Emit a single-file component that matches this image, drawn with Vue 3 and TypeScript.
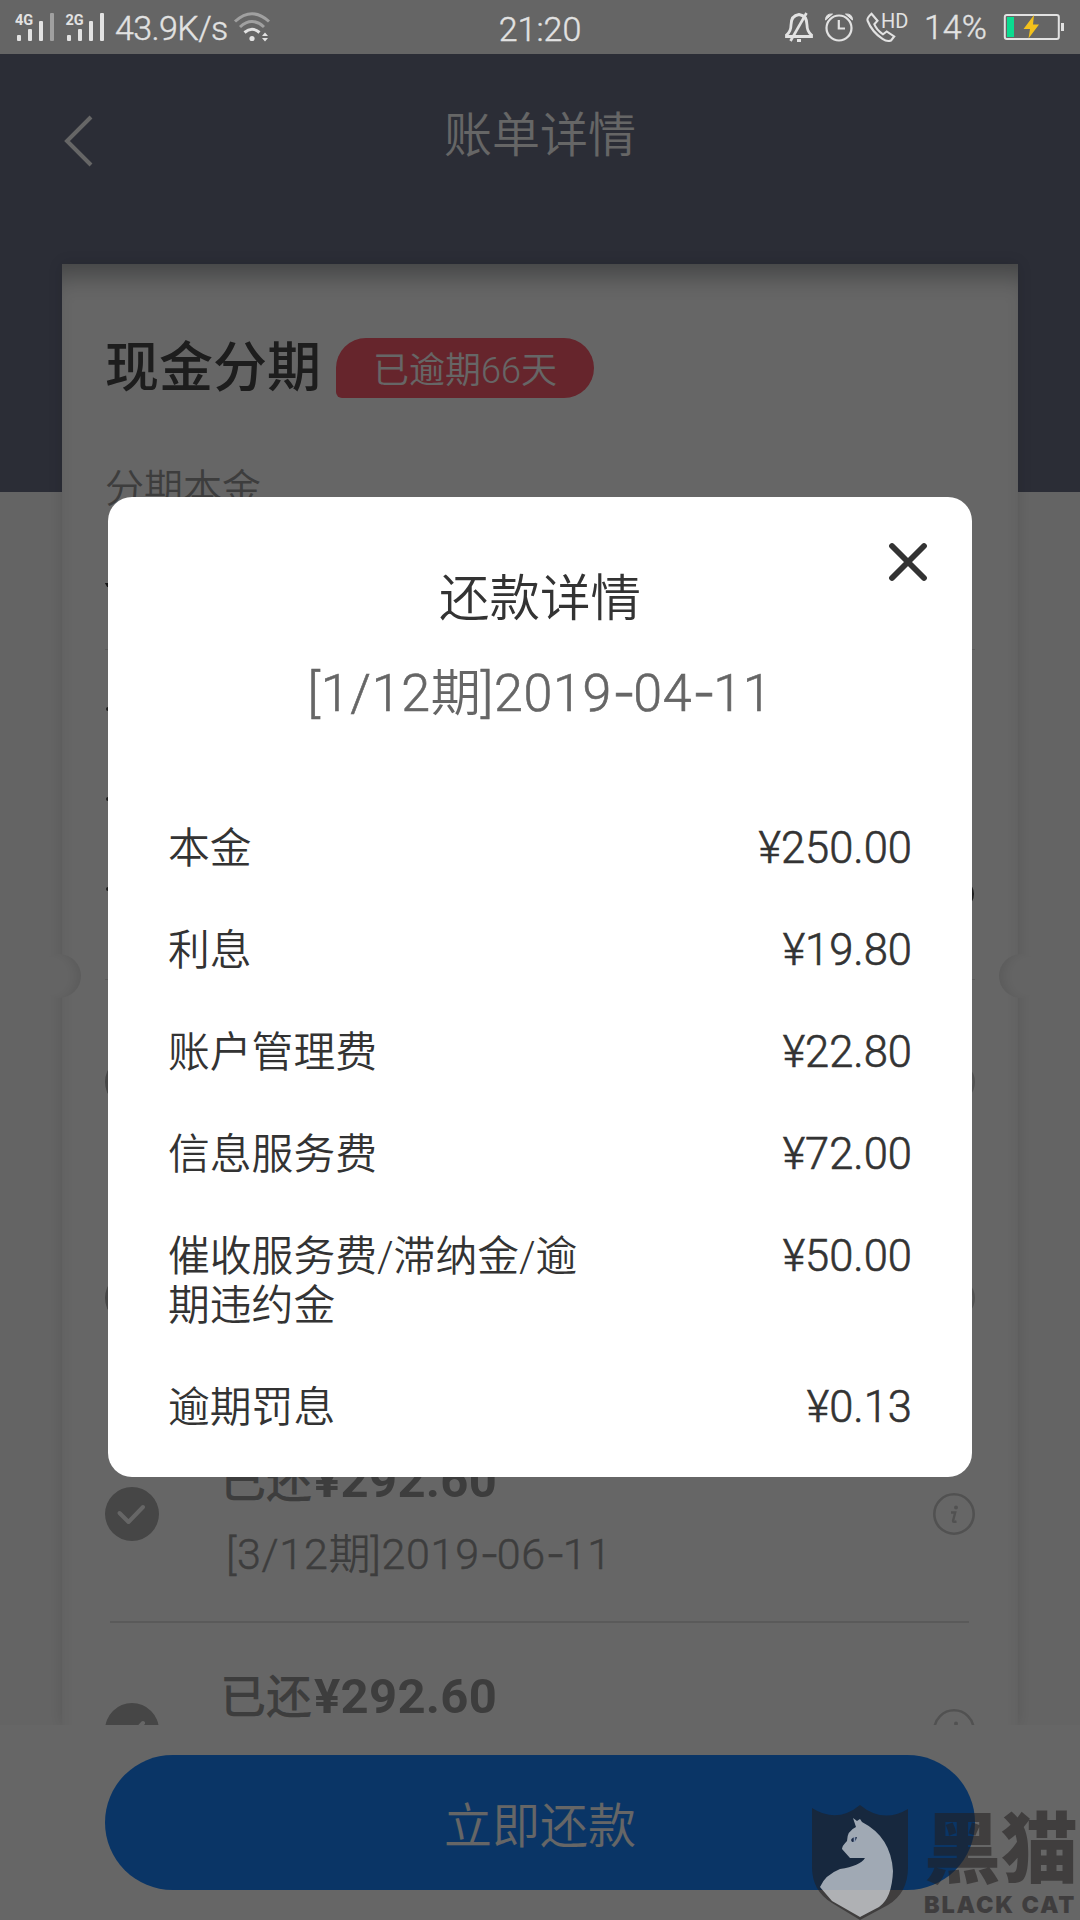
<script lang="ts" setup>
    import { ref } from "vue";

    interface FeeItem {
        label: string;
        amount: string;
    }

    interface Installment {
        period: number;
        date?: string;
        amount?: string;
    }

    const showModal = ref(true);
    const modalDate = "2019-04-11";

    const fees = ref<FeeItem[]>([
        { label: "本金", amount: "¥250.00" },
        { label: "利息", amount: "¥19.80" },
        { label: "账户管理费", amount: "¥22.80" },
        { label: "信息服务费", amount: "¥72.00" },
        { label: "催收服务费/滞纳金/逾期违约金", amount: "¥50.00" },
        { label: "逾期罚息", amount: "¥0.13" },
    ]);

    const installments = ref<Installment[]>([
        { period: 1 },
        { period: 2 },
        { period: 3, date: "2019-06-11", amount: "¥292.60" },
        { period: 4, amount: "¥292.60" },
    ]);

    const closeModal = () => {
        showModal.value = false;
    }
</script>

<template>
    <div class="page">
        <div class="status-bar">
            <div class="status-left">
                <svg class="signals" width="92" height="54" viewBox="0 0 92 54">
                    <text class="net" x="0" y="24.5">4G</text>
                    <g fill="#e2e2e2">
                        <rect x="2" y="35" width="4" height="6" rx="1" />
                        <rect x="13" y="29" width="4" height="12" rx="1" />
                        <rect x="24" y="21" width="4" height="20" rx="1" />
                        <rect x="35" y="13" width="4" height="28" rx="1" fill="#a0a0a0" />
                        <rect x="52" y="35" width="4" height="6" rx="1" />
                        <rect x="63" y="29" width="4" height="12" rx="1" />
                        <rect x="74" y="21" width="4" height="20" rx="1" />
                        <rect x="85" y="13" width="4" height="28" rx="1" />
                    </g>
                    <text class="net" x="50.5" y="24.5">2G</text>
                </svg>
                <span class="speed">43.9K/s</span>
                <svg class="wifi" width="40" height="54" viewBox="0 0 40 54" fill="none">
                    <path d="M2 21.5 Q19 6 36 21.5" stroke="#a0a0a0" stroke-width="3" />
                    <path d="M7 27 Q19 16 31 27" stroke="#a0a0a0" stroke-width="3" />
                    <path d="M11.5 32.5 Q19 26 26.5 32.5" stroke="#e2e2e2" stroke-width="3" />
                    <circle cx="19" cy="38.5" r="2.6" fill="#e2e2e2" />
                    <path d="M29 36 L32 32.5 L35 36 Z M29 38 L32 41.5 L35 38 Z" fill="#e2e2e2" />
                </svg>
            </div>
            <span class="clock">21:20</span>
            <div class="status-right">
                <svg width="124" height="54" viewBox="784 0 124 54" fill="none" stroke="#e2e2e2" stroke-width="2.4">
                    <path d="M786.5 36.5 H811.5 V35 Q807 31.5 807 25 Q807 15.5 799 14.5 Q791 15.5 791 25 Q791 31.5 786.5 35 Z" stroke-width="2.8" />
                    <path d="M790.5 41 L806.5 13" stroke-width="2.6" />
                    <path d="M797 40.5 H801" stroke-width="3" />
                    <circle cx="839" cy="28" r="12.5" stroke-width="2.2" />
                    <path d="M838.8 20 V28.5 H845" stroke-width="2.2" />
                    <path d="M825.5 20 Q825.5 13.5 832.5 14 Z M852.5 20 Q852.5 13.5 845.5 14 Z" fill="#e2e2e2" stroke-width="1" />
                    <path d="M871.5 13.8 L877.5 20.8 L874.3 24.2 Q876.5 30 883 34.3 L886.7 31.5 L894.2 36.5 L891 40.5 Q887 42 882.5 38.8 Q872 32 867.5 20.5 Q866.8 18 871.5 13.8 Z" stroke-width="2.1" />
                    <text class="hd" x="881" y="27.5">HD</text>
                </svg>
                <span class="percent">14%</span>
                <svg width="62" height="54" viewBox="1003 0 62 54">
                    <rect x="1004.8" y="15" width="54" height="24" rx="2" fill="none" stroke="#e2e2e2" stroke-width="2" />
                    <rect x="1061" y="23" width="3" height="8" fill="#e2e2e2" />
                    <rect x="1007" y="17" width="7" height="20" fill="#0bdc90" />
                    <path d="M1034 15 L1023.5 29 H1030 L1028.5 38.5 L1039 24.5 H1033 Z" fill="#f3c11c" />
                </svg>
            </div>
        </div>

        <div class="nav">
            <svg class="back" width="32" height="56" viewBox="0 0 32 56" fill="none">
                <path d="M28 4 L4 28 L28 52" stroke="#fff" stroke-width="4" />
            </svg>
            <h1>账单详情</h1>
        </div>

        <div class="card">
            <div class="card-head">
                <h2>现金分期</h2>
                <span class="badge">已逾期66天</span>
            </div>
            <div class="summary-label">分期本金</div>
            <div class="summary-amount"><i></i></div>
            <div class="summary-row"><i></i></div>
            <div class="summary-row"><i></i></div>
            <div class="summary-row last"><i></i><i class="end"></i></div>
            <span class="notch notch-left"></span>
            <span class="notch notch-right"></span>
            <div class="list">
                <div v-for="item in installments" :key="item.period" class="item">
                    <svg class="check" width="54" height="54" viewBox="0 0 54 54">
                        <circle cx="27" cy="27" r="27" fill="#aeaeae" />
                        <path d="M14.5 26 L23.5 35 L38 20" fill="none" stroke="#fff" stroke-width="4" stroke-linecap="round" stroke-linejoin="round" />
                    </svg>
                    <div class="item-text">
                        <div v-if="item.amount" class="paid">已还<b>{{ item.amount }}</b></div>
                        <div v-if="item.date" class="item-date">
                            <span>[{{ item.period }}/12</span>期<span>]<template v-for="(part, i) in item.date.split('-')" :key="i"><i v-if="i">-</i>{{ part }}</template></span>
                        </div>
                    </div>
                    <svg class="info" width="42" height="42" viewBox="0 0 42 42">
                        <circle cx="21" cy="21" r="19.7" fill="none" stroke="#cbcbcb" stroke-width="2.6" />
                        <circle cx="23" cy="14.5" r="2" fill="#cbcbcb" />
                        <path d="M18 19.5 H22.2 L20 28 Q20 29.5 23.5 28.3" fill="none" stroke="#cbcbcb" stroke-width="2.4" />
                    </svg>
                </div>
            </div>
        </div>

        <div class="footer">
            <button class="pay">立即还款</button>
        </div>

        <div v-if="showModal" class="modal-overlay">
            <div class="modal">
                <svg class="modal-close" width="42" height="42" viewBox="0 0 42 42" @click="closeModal">
                    <path d="M5 5 L37 37 M37 5 L5 37" stroke="#333" stroke-width="5.8" stroke-linecap="round" />
                </svg>
                <h3>还款详情</h3>
                <div class="modal-date">
                    <span>[1/12</span>期<span>]<template v-for="(part, i) in modalDate.split('-')" :key="i"><i v-if="i">-</i>{{ part }}</template></span>
                </div>
                <div class="fees">
                    <div v-for="fee in fees" :key="fee.label" class="fee">
                        <span class="fee-label">{{ fee.label }}</span>
                        <span class="fee-amount">{{ fee.amount }}</span>
                    </div>
                </div>
            </div>
        </div>

        <div class="watermark">
            <svg width="98" height="116" viewBox="0 0 98 116">
                <path d="M1 3 Q26 19 49 0 Q72 19 97 4 V62 Q97 88 77 100 L49 115 L21 98 Q1 86 1 62 Z" fill="#221e1f" fill-opacity="0.56" />
                <path d="M42 13 L46 16 L49 14 L51 17 Q80 32 82 66 Q81 93 68 102 L49 112 L21 96 L9 82 Q14 70 29 64 Q49 61 54 53 H39 L31 44 Q31 41 36 36 Q36 26 45 22 Z" fill="#eef2f7" fill-opacity="0.64" />
                <path d="M40 35 Q41 32 46 32 Q45 37 41 37 Z" fill="#1c2c48" />
                <path d="M43.5 32 V37" stroke="#8c9cb4" stroke-width="1.6" />
            </svg>
            <div class="brand">
                <strong>黑猫</strong>
                <em>BLACK CAT</em>
            </div>
        </div>
    </div>
</template>

<style>
    body {
        background: #656565;
        overflow: hidden;
    }
</style>

<style scoped>
    .page {
        position: relative;
        display: flex;
        flex-direction: column;
        width: 1080px;
        height: 1920px;
        overflow: hidden;
        background: #fafafa;
        font-family: Roboto, "Noto Sans CJK SC", sans-serif;
    }

    h1, h2, h3 {
        margin: 0;
        font-weight: 350;
    }

    /* Status bar */
    .status-bar {
        flex: none;
        display: grid;
        grid-template-columns: 1fr auto 1fr;
        align-items: center;
        height: 54px;
        background: #656565;
        color: #e2e2e2;
        font-size: 34px;
        font-weight: 350;
        line-height: 54px;
        -webkit-text-stroke: 0.4px currentColor;
    }

    .status-bar svg {
        display: block;
    }

    .status-left {
        display: flex;
        padding-left: 15px;
    }

    .net {
        fill: #e2e2e2;
        font-size: 14.5px;
        font-weight: 700;
    }

    .speed {
        width: 116px;
        margin-left: 8px;
        padding-top: 1px;
        height: 53px;
        letter-spacing: -0.6px;
        white-space: nowrap;
    }

    .wifi {
        margin-left: 2px;
    }

    .clock {
        padding-top: 4px;
        height: 50px;
        line-height: 50px;
    }

    .status-right {
        display: flex;
        justify-content: flex-end;
        padding-right: 15px;
    }

    .hd {
        fill: #e2e2e2;
        stroke: none;
        font-size: 20px;
        font-weight: 400;
    }

    .percent {
        width: 79px;
        margin-left: 16px;
    }

    /* Header */
    .nav {
        flex: none;
        position: relative;
        height: 438px;
        background: #6b7087;
        color: #fff;
        text-align: center;
    }

    .nav h1 {
        padding-top: 47px;
        font-size: 48px;
        line-height: 70px;
    }

    .back {
        position: absolute;
        left: 63px;
        top: 59px;
    }

    /* Bill card */
    .card {
        flex: none;
        position: relative;
        box-sizing: border-box;
        width: 956px;
        height: 1461px;
        margin: -228px auto 0;
        padding-top: 74px;
        background: #fff;
        box-shadow: 0 0 14px rgba(0, 0, 0, 0.12), inset 0 26px 24px -14px rgba(40, 44, 50, 0.4);
    }

    .card-head {
        display: flex;
        align-items: center;
        height: 60px;
        padding-left: 43px;
    }

    .card-head h2 {
        width: 231px;
        padding-top: 2px;
        font-size: 54px;
        line-height: 60px;
        font-weight: 500;
        color: #4a4a4a;
        white-space: nowrap;
    }

    .badge {
        box-sizing: border-box;
        width: 258px;
        height: 60px;
        padding-top: 3px;
        border-radius: 30px 30px 30px 6px;
        background: #ff5c6e;
        color: #fff;
        font-size: 36px;
        font-weight: 350;
        line-height: 60px;
        text-align: center;
        white-space: nowrap;
    }

    .summary-label {
        margin-top: 67px;
        padding-left: 43px;
        font-size: 39px;
        line-height: 48px;
        font-weight: 350;
        color: #999;
    }

    .summary-amount {
        box-sizing: border-box;
        height: 137px;
        margin: 0 43px;
        padding-top: 70px;
        border-bottom: 1px solid #e0e0e0;
    }

    .summary-amount i {
        display: block;
        width: 8px;
        height: 4px;
        margin-left: 1px;
        background: #333;
        transform: skewX(30deg);
    }

    .summary-row {
        box-sizing: border-box;
        display: flex;
        justify-content: space-between;
        height: 90px;
        margin: 0 43px;
        padding-top: 57px;
    }

    .summary-row.last {
        height: 150px;
        border-bottom: 1px solid #e0e0e0;
    }

    .summary-row i {
        width: 4px;
        height: 4px;
        margin-left: 1px;
        border-radius: 2px;
        background: #4a4a4a;
    }

    .summary-row .end {
        width: 12px;
        height: 20px;
        margin: -3px 1px 0 0;
        border-radius: 6px / 10px;
    }

    .notch {
        position: absolute;
        top: 690px;
        width: 44px;
        height: 44px;
        border-radius: 22px;
        background: #fafafa;
    }

    .notch-left {
        left: -25px;
        box-shadow: inset -10px 0 12px -6px rgba(0, 0, 0, 0.1);
    }

    .notch-right {
        right: -25px;
        box-shadow: inset 10px 0 12px -6px rgba(0, 0, 0, 0.1);
    }

    .list {
        height: 750px;
        margin-top: -5px;
        overflow: hidden;
    }

    .item {
        display: flex;
        align-items: flex-start;
        height: 214px;
        margin: 0 49px 0 48px;
        border-bottom: 2px solid #e0e0e0;
    }

    .check {
        flex: none;
        margin: 80px 0 0 -5px;
    }

    .item-text {
        flex: 1;
        padding: 44px 0 0 61px;
        color: #999;
    }

    .paid {
        font-size: 46px;
        line-height: 60px;
        font-weight: 500;
        white-space: nowrap;
    }

    .paid b {
        margin-left: 2px;
        font-size: 49px;
        font-weight: 700;
        letter-spacing: 0.3px;
    }

    .item-date {
        margin-top: 12px;
        padding-left: 6px;
        font-size: 42px;
        line-height: 60px;
        font-weight: 350;
        white-space: nowrap;
    }

    .item-date span {
        font-size: 43px;
        letter-spacing: 0.7px;
        -webkit-text-stroke: 0.5px currentColor;
    }

    .item-date i,
    .modal-date i {
        font-family: Inter, sans-serif;
        font-style: normal;
        letter-spacing: -2.5px;
    }

    .info {
        flex: none;
        margin: 86px -6px 0 0;
    }

    /* Bottom action */
    .footer {
        flex: none;
        position: relative;
        box-sizing: border-box;
        height: 195px;
        padding: 30px 105px;
        background: #fff;
    }

    .pay {
        display: block;
        width: 870px;
        height: 135px;
        padding: 0 0 2px;
        border: 0;
        border-radius: 68px;
        background: #1b86ff;
        color: #fff;
        font-family: inherit;
        font-size: 48px;
        font-weight: 350;
    }

    /* Repayment detail modal */
    .modal-overlay {
        position: absolute;
        top: 54px;
        right: 0;
        bottom: 0;
        left: 0;
        display: flex;
        justify-content: center;
        align-items: center;
        background: rgba(0, 0, 0, 0.6);
    }

    .modal {
        position: relative;
        box-sizing: border-box;
        width: 864px;
        height: 980px;
        padding: 67px 60px 0;
        border-radius: 24px;
        background: #fff;
        color: #333;
    }

    .modal-close {
        position: absolute;
        top: 44px;
        right: 43px;
        cursor: pointer;
    }

    .modal h3 {
        font-size: 50.5px;
        line-height: 70px;
        text-align: center;
    }

    .modal-date {
        margin-top: 24px;
        font-size: 50px;
        line-height: 70px;
        font-weight: 350;
        color: #666;
        text-align: center;
        white-space: nowrap;
    }

    .modal-date span {
        font-size: 52px;
        letter-spacing: 0.7px;
        -webkit-text-stroke: 0.6px currentColor;
    }

    .fees {
        display: flex;
        flex-direction: column;
        gap: 53px;
        margin-top: 95px;
    }

    .fee {
        display: flex;
        justify-content: space-between;
        line-height: 49px;
        font-weight: 350;
    }

    .fee-label {
        width: 420px;
        font-size: 41.8px;
    }

    .fee-amount {
        font-size: 43.5px;
        -webkit-text-stroke: 0.6px currentColor;
    }

    /* Watermark */
    .watermark {
        position: absolute;
        left: 811px;
        top: 1805px;
        display: flex;
    }

    .brand {
        display: flex;
        flex-direction: column;
        padding: 6px 0 0 15px;
        color: rgba(34, 30, 31, 0.56);
    }

    .brand strong {
        font-size: 77px;
        line-height: 80px;
        font-weight: 900;
    }

    .brand em {
        font-family: Inter, sans-serif;
        font-size: 23.5px;
        line-height: 28px;
        font-style: normal;
        font-weight: 900;
        letter-spacing: 1.8px;
        white-space: nowrap;
    }
</style>
